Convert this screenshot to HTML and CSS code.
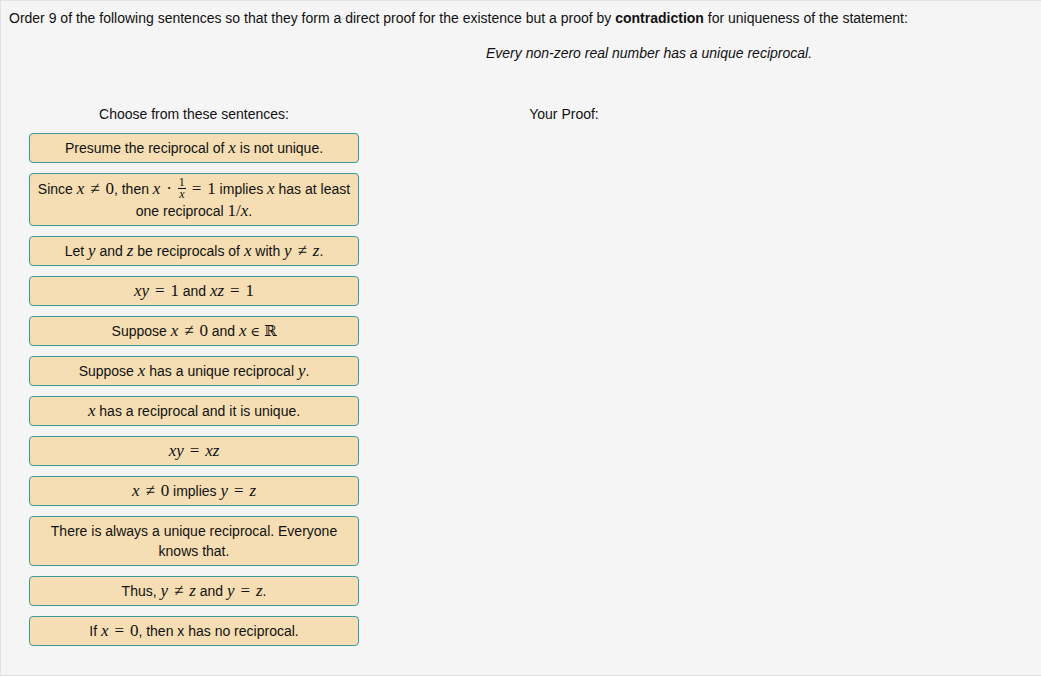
FILE: index.html
```html
<!DOCTYPE html>
<html lang="en">
<head>
    <meta charset="UTF-8">
    <title>Proof ordering</title>
    <link rel="stylesheet" href="styles.css">
</head>
<body>
    <div class="page">
        <p class="prompt">Order 9 of the following sentences so that they form a direct proof for the existence but a proof by <b>contradiction</b> for uniqueness of the statement:</p>
        <p class="statement">Every non-zero real number has a unique reciprocal.</p>
        <div class="columns">
            <div class="column">
                <div class="heading">Choose from these sentences:</div>
                <div class="cards">
                    <div class="card">Presume the reciprocal of <i class="m">x</i> is not unique.</div>
                    <div class="card tall">Since <span class="mm"><i class="m">x</i> <span class="op">≠</span> <span class="n">0</span></span>, then <span class="mm"><i class="m">x</i> <span class="op">·</span> <span class="frac"><span class="num">1</span><span class="den"><i>x</i></span></span> <span class="op">=</span> <span class="n">1</span></span> implies <i class="m">x</i> has at least one reciprocal <span class="mm"><span class="n">1</span><span class="n">/</span><i class="m">x</i></span>.</div>
                    <div class="card">Let <i class="m">y</i> and <i class="m">z</i> be reciprocals of <i class="m">x</i> with <span class="mm"><i class="m">y</i> <span class="op">≠</span> <i class="m">z</i></span>.</div>
                    <div class="card"><span class="mm"><i class="m">xy</i> <span class="op">=</span> <span class="n">1</span></span> and <span class="mm"><i class="m">xz</i> <span class="op">=</span> <span class="n">1</span></span></div>
                    <div class="card">Suppose <span class="mm"><i class="m">x</i> <span class="op">≠</span> <span class="n">0</span></span> and <span class="mm"><i class="m">x</i> <span class="in">∈</span> <span class="bb">ℝ</span></span></div>
                    <div class="card">Suppose <i class="m">x</i> has a unique reciprocal <i class="m">y</i>.</div>
                    <div class="card"><i class="m">x</i> has a reciprocal and it is unique.</div>
                    <div class="card"><span class="mm"><i class="m">xy</i> <span class="op">=</span> <i class="m">xz</i></span></div>
                    <div class="card"><span class="mm"><i class="m">x</i> <span class="op">≠</span> <span class="n">0</span></span> implies <span class="mm"><i class="m">y</i> <span class="op">=</span> <i class="m">z</i></span></div>
                    <div class="card">There is always a unique reciprocal. Everyone knows that.</div>
                    <div class="card">Thus, <span class="mm"><i class="m">y</i> <span class="op">≠</span> <i class="m">z</i></span> and <span class="mm"><i class="m">y</i> <span class="op">=</span> <i class="m">z</i></span>.</div>
                    <div class="card">If <span class="mm"><i class="m">x</i> <span class="op">=</span> <span class="n">0</span></span>, then x has no reciprocal.</div>
                </div>
            </div>
            <div class="column">
                <div class="heading">Your Proof:</div>
                <div class="cards drop"></div>
            </div>
        </div>
    </div>
</body>
</html>
```

FILE: styles.css
```css
* {
    padding: 0;
    margin: 0;
    box-sizing: border-box;
}

body {
    font-family: "Liberation Sans", Arial, sans-serif;
    font-size: 14px;
    color: #111;
    background-color: #fff;
}

.page {
    height: 676px;
    background-color: #f5f5f5;
    border: 1px solid #e2e2e2;
    border-right: none;
}

.prompt {
    padding: 8px 8px 0;
    line-height: 18px;
}

.statement {
    margin-top: 17px;
    padding-left: 256px;
    text-align: center;
    font-style: italic;
    line-height: 18px;
}

.columns {
    display: flex;
    gap: 40px;
    margin-top: 43px;
    padding-left: 28px;
}

.column {
    width: 330px;
}

.heading {
    text-align: center;
    line-height: 18px;
    margin-bottom: 10px;
}

.cards {
    display: flex;
    flex-direction: column;
    gap: 10px;
}

.card {
    background-color: #f5deb3;
    border: 1px solid #3c9a9a;
    border-radius: 4px;
    padding: 4px 3px;
    line-height: 20px;
    text-align: center;
}

.card.tall {
    line-height: 22px;
    padding-bottom: 3px;
}

.m, .n, .op, .in, .bb {
    font-family: "Liberation Serif", "Times New Roman", serif;
    font-size: 17px;
    line-height: 12px;
}

.m {
    font-style: italic;
}

.op {
    margin: 0 2px;
}

.mm {
    white-space: nowrap;
}

.frac {
    display: inline-block;
    vertical-align: middle;
    line-height: 9px;
    font-size: 12px;
    font-family: "Liberation Serif", serif;
    text-align: center;
    margin-top: -3px;
}

.frac i {
    font-style: italic;
}

.num {
    display: block;
    padding: 0 1px 1px;
    border-bottom: 1px solid #111;
}

.den {
    display: block;
    padding-top: 1px;
}

.in {
    font-family: "DejaVu Serif", serif;
    font-size: 13px;
}

.bb {
    font-family: "DejaVu Serif", serif;
    font-size: 15px;
}
```
